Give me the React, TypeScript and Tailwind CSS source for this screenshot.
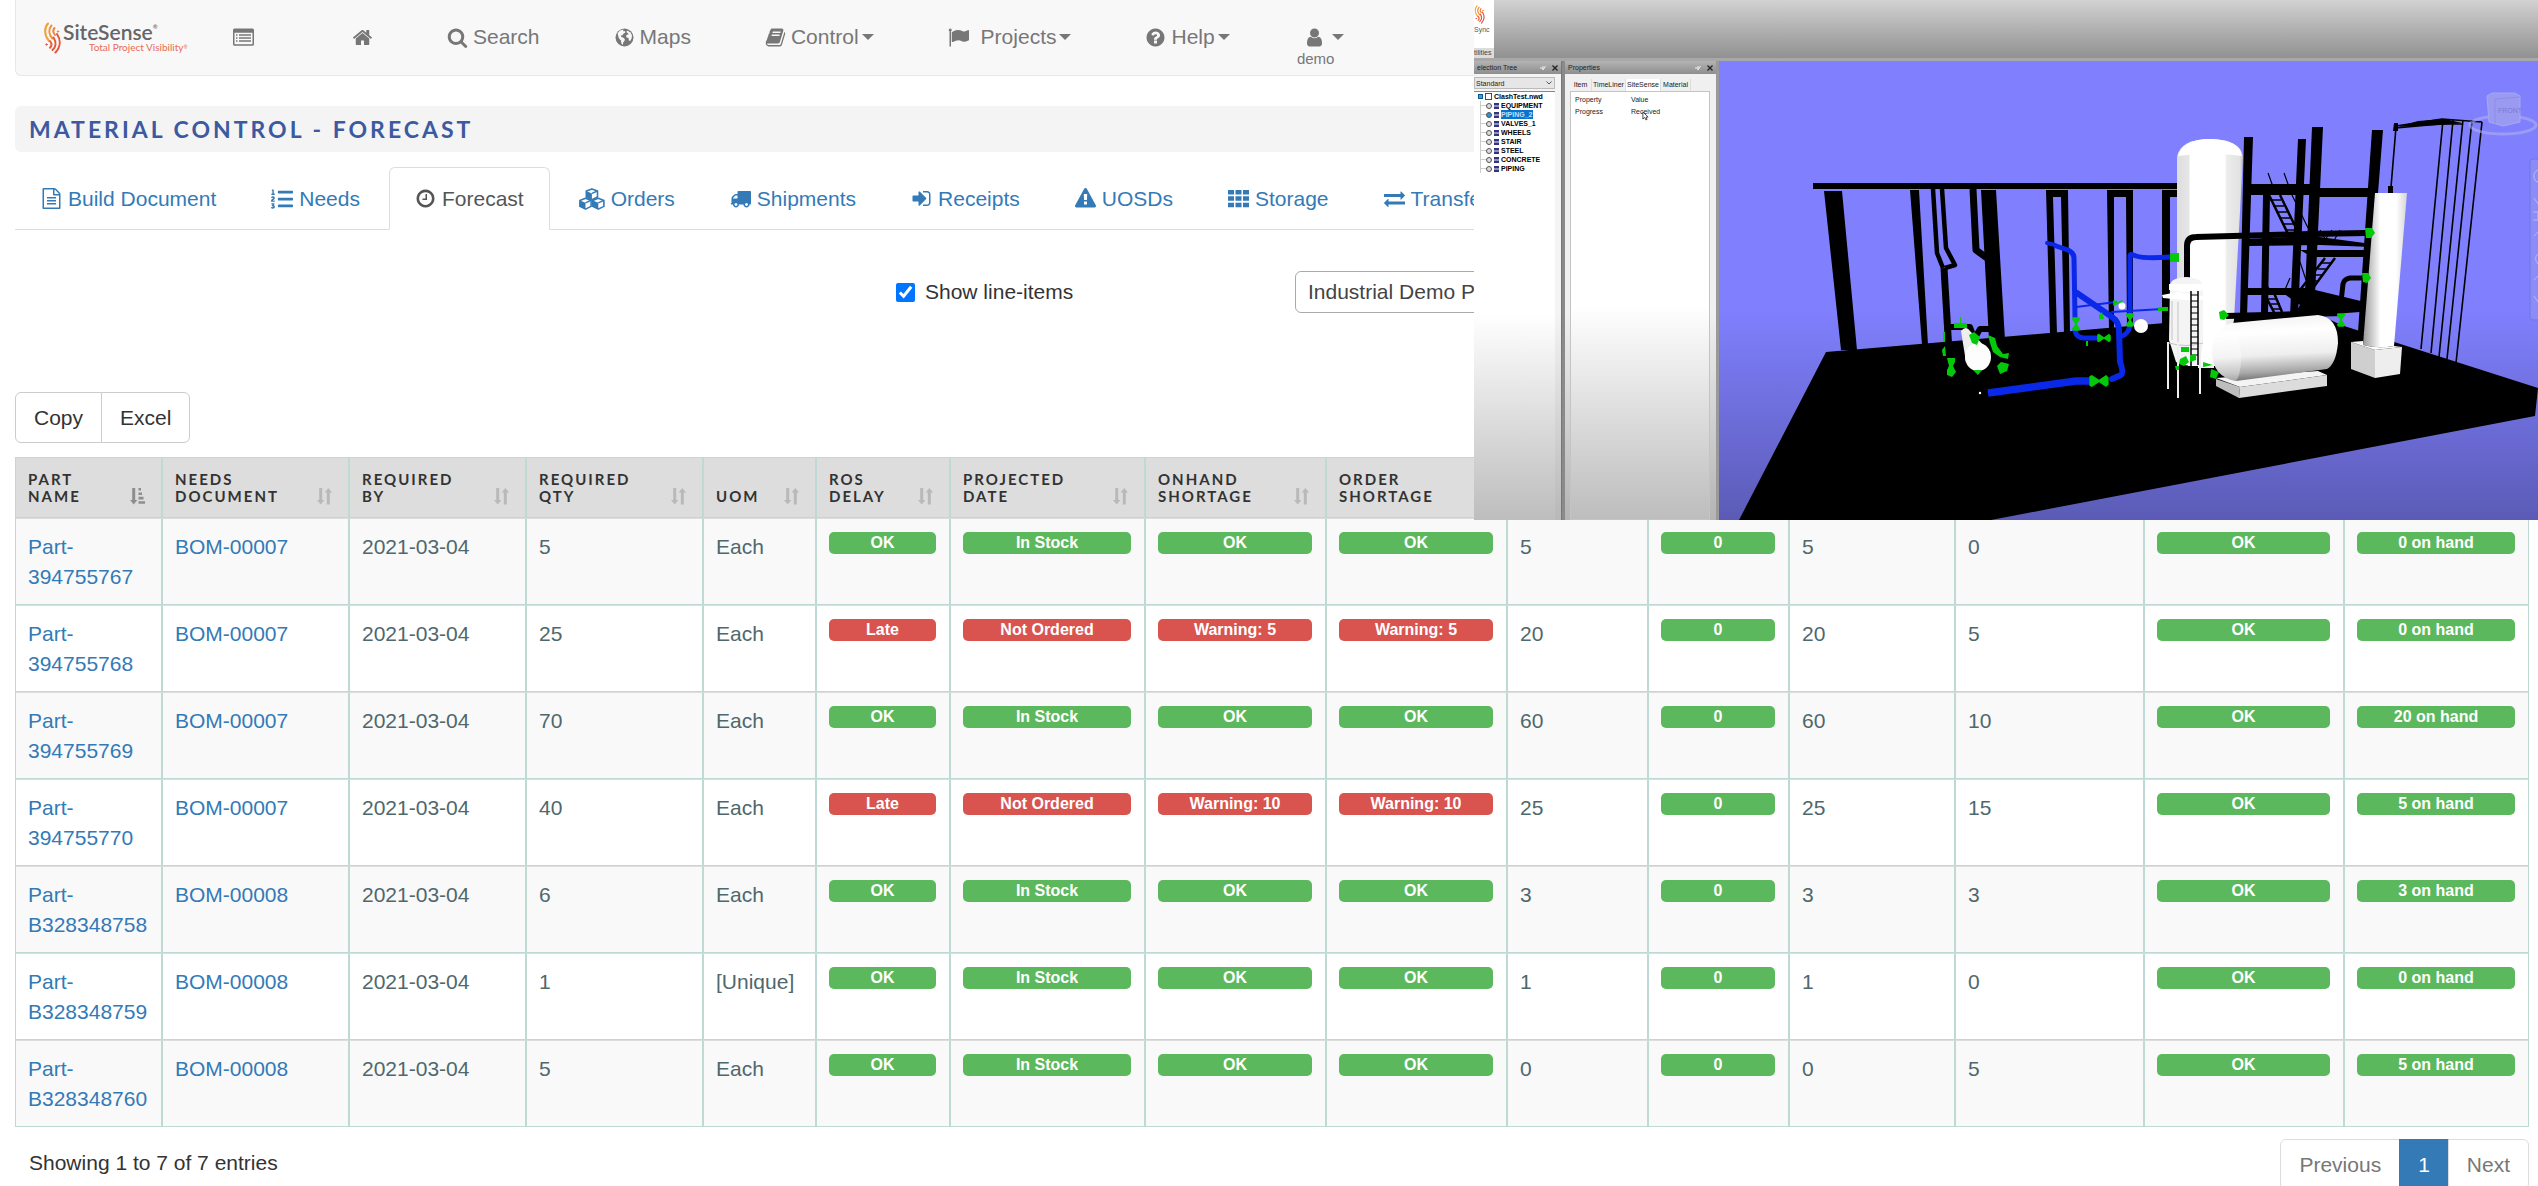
import React from "react";
import { FaListOl } from "react-icons/fa";

/* ---------- icons ---------- */

const PATHS: Record<string, string> = {
  search:
    "M1216 832q0-185-131.5-316.5t-316.5-131.5-316.5 131.5-131.5 316.5 131.5 316.5 316.5 131.5 316.5-131.5 131.5-316.5zm512 832q0 52-38 90t-90 38q-54 0-90-38l-343-342q-179 124-399 124-143 0-273.5-55.5t-225-150-150-225-55.5-273.5 55.5-273.5 150-225 225-150 273.5-55.5 273.5 55.5 225 150 150 225 55.5 273.5q0 220-124 399l343 343q37 37 37 90z",
  home: "M1472 992v480q0 26-19 45t-45 19h-384v-384h-256v384h-384q-26 0-45-19t-19-45v-480q0-1 .5-3t.5-3l575-474 575 474q1 2 1 6zm223-69l-62 74q-8 9-21 11h-3q-13 0-21-7l-692-577-692 577q-12 8-24 7-13-2-21-11l-62-74q-8-10-7-23.5t11-21.5l719-599q32-26 76-26t76 26l244 204v-195q0-14 9-23t23-9h192q14 0 23 9t9 23v408l219 182q10 8 11 21.5t-7 23.5z",
  list: "M128 128h1536q128 0 128 128v1216q0 128-128 128h-1536q-128 0-128-128v-1216q0-128 128-128zm0 352v992h1536v-992zM256 608h128v128h-128zM512 608h1024v128h-1024zM256 864h128v128h-128zM512 864h1024v128h-1024zM256 1120h128v128h-128zM512 1120h1024v128h-1024z",
  book: "M1703 478q40 57 18 129l-275 906q-19 64-76.5 107.5t-122.5 43.5h-923q-77 0-148.5-53.5t-99.5-131.5q-24-67-2-127 0-4 3-27t4-37q1-8-3-21.5t-3-19.5q2-11 8-21t16.5-23.5 16.5-23.5q23-38 45-91.5t30-91.5q3-10 .5-30t-.5-28q3-11 17-28t17-23q21-36 42-92t25-90q1-9-2.5-32t.5-28q4-13 22-30.5t22-22.5q19-26 42.5-84.5t27.5-96.5q1-8-3-25.5t-2-26.5q2-8 9-18t18-23 17-21q8-12 16.5-30.5t15-35 16-36 19.5-32 26.5-23.5 36-11.5 47.5 5.5l-1 3q38-9 51-9h761q74 0 114 56t18 130l-274 906q-36 119-71.5 153.5t-128.5 34.5h-869q-27 0-38 15-11 16-1 43 24 70 144 70h923q29 0 56-15.5t35-41.5l300-987q7-22 5-57 38 15 59 43zm-1064 2q-4 13 2 22.5t20 9.5h608q13 0 25.5-9.5t16.5-22.5l21-64q4-13-2-22.5t-20-9.5h-608q-13 0-25.5 9.5t-16.5 22.5zm-83 256q-4 13 2 22.5t20 9.5h608q13 0 25.5-9.5t16.5-22.5l21-64q4-13-2-22.5t-20-9.5h-608q-13 0-25.5 9.5t-16.5 22.5z",
  flag: "M320 256q0 72-64 110v1266q0 13-9.5 22.5t-22.5 9.5h-64q-13 0-22.5-9.5t-9.5-22.5v-1266q-64-38-64-110 0-53 37.5-90.5t90.5-37.5 90.5 37.5 37.5 90.5zm1472 64v763q0 25-12.5 38.5t-39.5 27.5q-215 116-369 116-61 0-123.5-22t-108.5-48-115.5-48-142.5-22q-192 0-464 146-17 9-33 9-26 0-45-19t-19-45v-742q0-32 31-55 21-14 79-43 236-120 421-120 107 0 200 29t219 88q38 19 88 19 54 0 117.5-21t110-47 88-47 54.5-21q26 0 45 19t19 45z",
  help: "M1024 1376v-192q0-14-9-23t-23-9h-192q-14 0-23 9t-9 23v192q0 14 9 23t23 9h192q14 0 23-9t9-23zm256-672q0-88-55.5-163t-138.5-116-170-41q-243 0-371 213-15 24 8 42l132 100q7 6 19 6 16 0 25-12 53-68 86-92 34-24 86-24 48 0 85.5 26t37.5 59q0 38-20 61t-68 45q-63 28-115.5 86.5t-52.5 125.5v36q0 14 9 23t23 9h192q14 0 23-9t9-23q0-19 21.5-49.5t54.5-49.5q32-18 49-28.5t46-35 44.5-48 28-60.5 12.5-81zm384 192q0 209-103 385.5t-279.5 279.5-385.5 103-385.5-103-279.5-279.5-103-385.5 103-385.5 279.5-279.5 385.5-103 385.5 103 279.5 279.5 103 385.5z",
  user: "M1536 1399q0 109-62.5 187t-150.5 78h-854q-88 0-150.5-78t-62.5-187q0-85 8.5-160.5t31.5-152 58.5-131 94-89 134.5-34.5q131 128 313 128t313-128q76 0 134.5 34.5t94 89 58.5 131 31.5 152 8.5 160.5zm-256-887q0 159-112.5 271.5t-271.5 112.5-271.5-112.5-112.5-271.5 112.5-271.5 271.5-112.5 271.5 112.5 112.5 271.5z",
  file: "M1596 380q28 28 48 76t20 88v1152q0 40-28 68t-68 28h-1344q-40 0-68-28t-28-68v-1600q0-40 28-68t68-28h896q40 0 88 20t76 48zm-444-244v376h376q-10-29-22-41l-313-313q-12-12-41-22zm384 1528v-1024h-416q-40 0-68-28t-28-68v-416h-768v1536h1280zm-1024-864q0-14 9-23t23-9h704q14 0 23 9t9 23v64q0 14-9 23t-23 9h-704q-14 0-23-9t-9-23v-64zm736 224q14 0 23 9t9 23v64q0 14-9 23t-23 9h-704q-14 0-23-9t-9-23v-64q0-14 9-23t23-9h704zm0 256q14 0 23 9t9 23v64q0 14-9 23t-23 9h-704q-14 0-23-9t-9-23v-64q0-14 9-23t23-9h704z",
  clock:
    "M1024 544v448q0 14-9 23t-23 9h-320q-14 0-23-9t-9-23v-64q0-14 9-23t23-9h224v-352q0-14 9-23t23-9h64q14 0 23 9t9 23zm416 352q0-148-73-273t-198-198-273-73-273 73-198 198-73 273 73 273 198 198 273 73 273-73 198-198 73-273zm224 0q0 209-103 385.5t-279.5 279.5-385.5 103-385.5-103-279.5-279.5-103-385.5 103-385.5 279.5-279.5 385.5-103 385.5 103 279.5 279.5 103 385.5z",
  truck:
    "M640 1408q0-52-38-90t-90-38-90 38-38 90 38 90 90 38 90-38 38-90zm-384-512h384v-256h-158q-13 0-22 9l-195 195q-9 9-9 22v30zm1280 512q0-52-38-90t-90-38-90 38-38 90 38 90 90 38 90-38 38-90zm256-1088v1024q0 15-4 26.5t-13.5 18.5-16.5 11.5-23.5 6-22.5 2-25.5 0-22.5-.5q0 106-75 181t-181 75-181-75-75-181h-384q0 106-75 181t-181 75-181-75-75-181h-64q-3 0-22.5.5t-25.5 0-22.5-2-23.5-6-16.5-11.5-13.5-18.5-4-26.5q0-26 19-45t45-19v-320q0-8-.5-35t0-38 2.5-34.5 6.5-37 14-30.5 22.5-30l198-198q19-19 50.5-32t58.5-13h160v-192q0-26 19-45t45-19h1024q26 0 45 19t19 45z",
  signIn:
    "M1312 896q0 26-19 45l-544 544q-19 19-45 19t-45-19-19-45v-288h-448q-26 0-45-19t-19-45v-384q0-26 19-45t45-19h448v-288q0-26 19-45t45-19 45 19l544 544q19 19 19 45zm352-352v704q0 119-84.5 203.5t-203.5 84.5h-320q-13 0-22.5-9.5t-9.5-22.5q0-4-1-20t-.5-26.5 3-23.5 10-19.5 20.5-6.5h320q66 0 113-47t47-113v-704q0-66-47-113t-113-47h-312l-11.5-1-11.5-3-8-5.5-7-9-2-13.5q0-4-1-20t-.5-26.5 3-23.5 10-19.5 20.5-6.5h320q119 0 203.5 84.5t84.5 203.5z",
  warning:
    "M1024 1375v-190q0-14-9.5-23.5t-22.5-9.5h-192q-13 0-22.5 9.5t-9.5 23.5v190q0 14 9.5 23.5t22.5 9.5h192q13 0 22.5-9.5t9.5-23.5zm-2-374l18-459q0-12-10-19-13-11-24-11h-220q-11 0-24 11-10 7-10 21l17 457q0 10 10 16.5t24 6.5h185q14 0 23.5-6.5t10.5-16.5zm-14-934l768 1408q35 63-2 126-17 29-46.5 46t-63.5 17h-1536q-34 0-63.5-17t-46.5-46q-37-63-2-126l768-1408q17-31 47-49t65-18 65 18 47 49z",
  grid: "M0 160h512v384h-512zM640 160h512v384h-512zM1280 160h512v384h-512zM0 704h512v384h-512zM640 704h512v384h-512zM1280 704h512v384h-512zM0 1248h512v384h-512zM640 1248h512v384h-512zM1280 1248h512v384h-512z",
  exchange:
    "M1792 1184v192q0 13-9.5 22.5t-22.5 9.5h-1376v192q0 13-9.5 22.5t-22.5 9.5q-12 0-24-10l-319-320q-9-9-9-22 0-14 9-23l320-320q9-9 23-9 13 0 22.5 9.5t9.5 22.5v192h1376q13 0 22.5 9.5t9.5 22.5zm0-544q0 14-9 23l-320 320q-9 9-23 9-13 0-22.5-9.5t-9.5-22.5v-192h-1376q-13 0-22.5-9.5t-9.5-22.5v-192q0-13 9.5-22.5t22.5-9.5h1376v-192q0-14 9-23t23-9q12 0 24 10l319 319q9 9 9 23z",
};

function Icon({ name }: { name: string }) {
  return (
    <svg viewBox="0 0 1792 1792" className="size-[21px] shrink-0 fill-current" fillRule="evenodd" aria-hidden="true">
      <path d={PATHS[name]} />
    </svg>
  );
}

function GlobeIcon() {
  return (
    <svg viewBox="0 0 21 21" className="size-[21px] shrink-0" aria-hidden="true">
      <circle cx="10.5" cy="10.5" r="9" className="fill-current" />
      <path
        fill="#f8f8f8"
        d="M3.6 6.2 6 3.6 9.6 2.6 9 4.2 10.8 4 11.4 5.4 9.4 6.8 8.4 8.2 6.6 8.8 7.4 10 9 10.6 10.8 12 10.6 13.8 9.2 15.4 8.8 18 7.4 16.6 7 13.6 5 11.4 4.2 9zM13.2 3.4 16.6 5.4 18 8.4 17.6 11.4 16.2 14 14.8 13.4 14.6 11 12.6 10.6 12 8.8 13.4 7.6 15 7.2 13.6 6 12.4 5z"
      />
    </svg>
  );
}

function CubesIcon() {
  const cube = (x: number, y: number) => (
    <g transform={`translate(${x} ${y})`}>
      <path d="M6.5.9 12.1 3v6L6.5 11.7.9 9V3z" fill="none" stroke="currentColor" strokeWidth="1.6" strokeLinejoin="round" />
      <path d="M.9 3 6.5 5.4V11.7L.9 9z" fill="currentColor" />
      <path d="M6.5 5.4 12.1 3" stroke="currentColor" strokeWidth="1.4" />
    </g>
  );
  return (
    <svg viewBox="0 0 26 22" className="h-[22px] w-[26px] shrink-0" aria-hidden="true">
      {cube(6.4, 0)}
      {cube(0, 9.4)}
      {cube(12.8, 9.4)}
    </svg>
  );
}

function Caret() {
  return <span className="ml-[3px] border-x-[6px] border-t-[6px] border-x-transparent border-t-current" />;
}

function SortIcon({ active }: { active?: boolean }) {
  return (
    <svg
      viewBox="0 0 15 17"
      className={"h-[17px] w-[15px] shrink-0 " + (active ? "fill-[#8e8e8e]" : "fill-[#b9b9b9]")}
      aria-hidden="true"
    >
      <path d="M2.2 0h3v12H7.4L3.7 16.5 0 12h2.2z" />
      {active ? (
        <path d="M8.5 0h2.5v2.6H8.5zM8.5 4.4H12v2.6H8.5zM8.5 8.8h5v2.6h-5zM8.5 13.2H15v2.6H8.5z" />
      ) : (
        <path d="M9.8 16.5h3v-12H15L11.3 0 7.6 4.5h2.2z" />
      )}
    </svg>
  );
}

function Waves({ className }: { className: string }) {
  return (
    <svg viewBox="0 0 18 32" className={className} fill="none" strokeWidth="2" strokeLinecap="round" aria-hidden="true">
      <path stroke="#f2a23c" d="M4 1.5C0 6 0 13 5 19" />
      <path stroke="#f0923a" d="M7.500 3.5C4.500 7 4.500 12 8.500 16.500" />
      <path stroke="#ee8238" d="M10.500 6C8.800 8 9 10.500 11 13" />
      <path stroke="#e8543c" d="M13 12C17 18 16.500 25 11.500 30.500" />
      <path stroke="#e8543c" d="M9.500 15.500C12.500 20 12 25 8.500 28" />
      <path stroke="#ea6040" d="M6 19C8 21.500 7.700 24 6 25.800" />
      <circle cx="14" cy="9.500" r=".7" fill="#ee8238" stroke="#ee8238" strokeWidth="1" />
      <circle cx="2.500" cy="22.500" r=".7" fill="#e8543c" stroke="#e8543c" strokeWidth="1" />
    </svg>
  );
}

/* ---------- header ---------- */

function NavLink({ icon, label, caret }: { icon: React.ReactNode; label?: string; caret?: boolean }) {
  return (
    <a href="#" className="flex items-center whitespace-nowrap">
      {icon}
      {label && <span className="ml-[5px]">{label}</span>}
      {caret && <Caret />}
    </a>
  );
}

function NavBar() {
  return (
    <nav className="flex h-[76px] items-start rounded-b-md border border-t-0 border-[#e7e7e7] bg-[#f8f8f8] pt-[22px] pl-[28px] text-[#777]">
      <a href="#" className="flex w-[189px] items-start" aria-label="SiteSense home">
        <Waves className="h-[32px] w-[18px]" />
        <span className="ml-[1px] flex flex-col font-[Lato]">
          <span className="text-[21px] leading-[20px] font-semibold text-[#666]">
            SiteSense<sup className="top-[-11px] text-[6px]">®</sup>
          </span>
          <span className="pl-[26px] text-[10px] leading-[10px] whitespace-nowrap text-[#ea6a55]">
            Total Project Visibility<sup className="text-[5px]">®</sup>
          </span>
        </span>
      </a>
      <div className="flex items-start gap-[74px]">
        <span className="mr-6 flex h-[30px] items-center">
          <NavLink icon={<Icon name="list" />} />
        </span>
        <span className="flex h-[30px] items-center">
          <NavLink icon={<Icon name="home" />} />
        </span>
        <NavLink icon={<Icon name="search" />} label="Search" />
        <NavLink icon={<GlobeIcon />} label="Maps" />
        <NavLink icon={<Icon name="book" />} label="Control" caret />
        <a href="#" className="flex items-center">
          <Icon name="flag" />
          <span className="ml-3">Projects</span>
          <Caret />
        </a>
        <NavLink icon={<Icon name="help" />} label="Help" caret />
        <a href="#" className="-ml-2 flex flex-col items-center">
          <span className="flex h-[30px] items-center gap-1 pl-2">
            <Icon name="user" />
            <Caret />
          </span>
          <span className="-ml-2 text-[15px] leading-[14px]">demo</span>
        </a>
      </div>
    </nav>
  );
}

const TABS: { label: string; icon: React.ReactNode; active?: boolean }[] = [
  { label: "Build Document", icon: <Icon name="file" /> },
  { label: "Needs", icon: <FaListOl className="size-[22px]" /> },
  { label: "Forecast", icon: <Icon name="clock" />, active: true },
  { label: "Orders", icon: <CubesIcon /> },
  { label: "Shipments", icon: <Icon name="truck" /> },
  { label: "Receipts", icon: <Icon name="signIn" /> },
  { label: "UOSDs", icon: <Icon name="warning" /> },
  { label: "Storage", icon: <Icon name="grid" /> },
  { label: "Transfers", icon: <Icon name="exchange" /> },
];

function Tabs() {
  return (
    <ul className="mt-[15px] flex gap-[3px] border-b border-[#ddd]">
      {TABS.map((t) => (
        <li key={t.label} className="-mb-px">
          <a
            href="#"
            className={
              "flex h-[63px] items-center gap-[6px] rounded-t-md border px-[25px] whitespace-nowrap " +
              (t.active ? "border-[#ddd] border-b-white bg-white text-[#555]" : "border-transparent text-[#337ab7]")
            }
          >
            {t.icon}
            {t.label}
          </a>
        </li>
      ))}
    </ul>
  );
}

/* ---------- table ---------- */

const COLUMNS: { label: string[]; width: string }[] = [
  { label: ["Part", "Name"], width: "w-[147px]" },
  { label: ["Needs", "Document"], width: "w-[187px]" },
  { label: ["Required", "By"], width: "w-[177px]" },
  { label: ["Required", "Qty"], width: "w-[177px]" },
  { label: ["UOM"], width: "w-[113px]" },
  { label: ["ROS", "Delay"], width: "w-[134px]" },
  { label: ["Projected", "Date"], width: "w-[195px]" },
  { label: ["Onhand", "Shortage"], width: "w-[181px]" },
  { label: ["Order", "Shortage"], width: "w-[181px]" },
  { label: [], width: "w-[141px]" },
  { label: [], width: "w-[141px]" },
  { label: [], width: "w-[166px]" },
  { label: [], width: "w-[189px]" },
  { label: [], width: "w-[200px]" },
  { label: [], width: "w-[185px]" },
];

type Row = {
  part: string;
  doc: string;
  qty: number;
  uom: string;
  short: number;
  a: number;
  b: number;
  c: number;
  hand: number;
};

const ROWS: Row[] = [
  { part: "394755767", doc: "BOM-00007", qty: 5, uom: "Each", short: 0, a: 5, b: 5, c: 0, hand: 0 },
  { part: "394755768", doc: "BOM-00007", qty: 25, uom: "Each", short: 5, a: 20, b: 20, c: 5, hand: 0 },
  { part: "394755769", doc: "BOM-00007", qty: 70, uom: "Each", short: 0, a: 60, b: 60, c: 10, hand: 20 },
  { part: "394755770", doc: "BOM-00007", qty: 40, uom: "Each", short: 10, a: 25, b: 25, c: 15, hand: 5 },
  { part: "B328348758", doc: "BOM-00008", qty: 6, uom: "Each", short: 0, a: 3, b: 3, c: 3, hand: 3 },
  { part: "B328348759", doc: "BOM-00008", qty: 1, uom: "[Unique]", short: 0, a: 1, b: 1, c: 0, hand: 0 },
  { part: "B328348760", doc: "BOM-00008", qty: 5, uom: "Each", short: 0, a: 0, b: 0, c: 5, hand: 5 },
];

function Badge({ bad, children }: { bad?: boolean; children: React.ReactNode }) {
  return (
    <span
      className={
        "block h-[22px] rounded-[5px] text-center text-[16px] leading-[21px] font-bold text-white " +
        (bad ? "bg-[#d9534f]" : "bg-[#5cb85c]")
      }
    >
      {children}
    </span>
  );
}

function Cell({ children }: { children: React.ReactNode }) {
  return (
    <td className="h-[87px] border-x border-t border-b border-x-[#bfdad5] border-t-[#ddd] border-b-[#bfdad5] pt-[13px] pr-[13px] pl-3 align-top">
      {children}
    </td>
  );
}

function ForecastTable() {
  return (
    <table className="mt-[14px] w-full table-fixed border-separate border-spacing-0 text-[#4f686c]">
      <colgroup>
        {COLUMNS.map((c, i) => (
          <col key={i} className={c.width} />
        ))}
      </colgroup>
      <thead>
        <tr>
          {COLUMNS.map((c, i) => (
            <th
              key={i}
              scope="col"
              className="h-[61px] border border-[#bfdad5] bg-[#ddd] pr-4 pb-[12px] pl-3 text-left align-bottom font-['Trebuchet_MS',Lato,sans-serif] text-[15px] leading-[17px] font-bold tracking-[2px] text-[#333] uppercase"
            >
              <span className="flex items-end justify-between">
                <span>
                  {c.label.map((l) => (
                    <span key={l} className="block">
                      {l}
                    </span>
                  ))}
                </span>
                <SortIcon active={i === 0} />
              </span>
            </th>
          ))}
        </tr>
      </thead>
      <tbody>
        {ROWS.map((r) => {
          const bad = r.short > 0;
          const shortage = bad ? `Warning: ${r.short}` : "OK";
          return (
            <tr key={r.part} className="odd:bg-[#f9f9f9]">
              <Cell>
                <a href="#" className="block text-[#337ab7]">
                  Part-
                  <br />
                  {r.part}
                </a>
              </Cell>
              <Cell>
                <a href="#" className="text-[#337ab7]">
                  {r.doc}
                </a>
              </Cell>
              <Cell>2021-03-04</Cell>
              <Cell>{r.qty}</Cell>
              <Cell>{r.uom}</Cell>
              <Cell>
                <Badge bad={bad}>{bad ? "Late" : "OK"}</Badge>
              </Cell>
              <Cell>
                <Badge bad={bad}>{bad ? "Not Ordered" : "In Stock"}</Badge>
              </Cell>
              <Cell>
                <Badge bad={bad}>{shortage}</Badge>
              </Cell>
              <Cell>
                <Badge bad={bad}>{shortage}</Badge>
              </Cell>
              <Cell>{r.a}</Cell>
              <Cell>
                <Badge>0</Badge>
              </Cell>
              <Cell>{r.b}</Cell>
              <Cell>{r.c}</Cell>
              <Cell>
                <Badge>OK</Badge>
              </Cell>
              <Cell>
                <Badge>{r.hand} on hand</Badge>
              </Cell>
            </tr>
          );
        })}
      </tbody>
    </table>
  );
}

/* ---------- 3D viewer window ---------- */

function Valve({ x, y, r = 0, s = 0.85 }: { x: number; y: number; r?: number; s?: number }) {
  return <path fill="#04c80a" transform={`translate(${x} ${y}) rotate(${r}) scale(${s})`} d="M-8-4-6-5 0-1 6-5 8-3V3L6 5 0 1-6 5-8 4z" />;
}

function PlantScene() {
  return (
    <svg viewBox="1719 61 819 459" preserveAspectRatio="none" className="min-w-0 flex-1" role="img" aria-label="Plant model">
      <defs>
        <linearGradient id="sky" x1="0" y1="0" x2="0" y2="1">
          <stop offset="0" stopColor="#8080ff" />
          <stop offset="0.54" stopColor="#8080ff" />
          <stop offset="1" stopColor="#5b5bb6" />
        </linearGradient>
        <linearGradient id="tower" x1="0" x2="1">
          <stop offset="0" stopColor="#ddd" />
          <stop offset="0.18" stopColor="#e6e6e6" />
          <stop offset="0.2" stopColor="#fff" />
          <stop offset="0.72" stopColor="#fff" />
          <stop offset="0.76" stopColor="#ececec" />
          <stop offset="0.95" stopColor="#e2e2e2" />
          <stop offset="1" stopColor="#bbb" />
        </linearGradient>
        <linearGradient id="stack" x1="0" x2="1">
          <stop offset="0" stopColor="#999" />
          <stop offset="0.4" stopColor="#fff" />
          <stop offset="0.75" stopColor="#fff" />
          <stop offset="1" stopColor="#d5d5d5" />
        </linearGradient>
        <linearGradient id="drum" x1="0.45" y1="0" x2="0.55" y2="1">
          <stop offset="0" stopColor="#f2f2f2" />
          <stop offset="0.25" stopColor="#fff" />
          <stop offset="0.6" stopColor="#eee" />
          <stop offset="0.85" stopColor="#a8a8a8" />
          <stop offset="1" stopColor="#666" />
        </linearGradient>
      </defs>
      <rect x="1719" y="61" width="819" height="459" fill="url(#sky)" />

      {/* floor slab */}
      <path d="M1826 352 2165 323 2310 310 2341 325 2538 388 2535 416 1991 520H1739z" />

      {/* portal frames */}
      <path d="M1813 183H2178V189H1813z" />
      <path d="M1824 191H1842L1857 350H1841zM1910 190H1919L1928 345H1922zM1981 190H1996L2005 340H1989zM2046 190H2068L2070 334H2064L2061 197H2053L2057 334H2050zM2107 190H2133V330H2127L2126 197H2114V330H2109zM2162 190H2178V197H2170V326H2162z" />
      <g fill="none" stroke="#000" strokeLinejoin="round">
        <path strokeWidth="4.500" d="M1933 189 1937 253 1943 268M1942 189 1946 248 1955 265 1945 268" />
        <path strokeWidth="7" d="M1944 268 1949 352" />
        <path strokeWidth="7" d="M1973 189 1976 250 1987 258" />
        <path strokeWidth="6" d="M1949 327H1970L1974 338M1976 336 1980 329H1990" />
      </g>

      {/* stair tower steelwork */}
      <path d="M2244 137H2253L2247 316H2240zM2298 139H2306L2298 316H2290zM2312 127H2323L2314 316H2304zM2372 130H2383L2367 332H2358zM2263 195H2270L2268 314H2261z" />
      <path d="M2244 184H2312V189H2320V188H2376V197H2312V195H2244zM2247 239 2312 236 2372 244V247L2320 245 2247 246zM2300 250H2365V257H2312zM2244 288H2305V295H2242zM2280 291 2307 288 2369 303 2360 312 2293 317 2300 305z" />
      <g fill="none" stroke="#000">
        <path strokeWidth="2.500" d="M2269 195 2289 236M2280 195 2296 228M2325 258 2300 290M2335 258 2310 292M2266 297 2276 316M2274 293 2282 312" />
        <path
          strokeWidth="1.500"
          d="M2270 200H2281M2273 206H2284M2276 212H2287M2279 218H2290M2282 224H2293M2285 230H2296M2322 263H2331M2318 269H2327M2314 275H2323M2309 281H2318M2268 299H2277M2271 304H2280M2273 309H2282"
        />
        <path strokeWidth="1.200" d="M2268 173 2276 195M2284 173 2292 195M2292 195 2308 228M2320 230 2328 244M2332 230 2322 244M2340 230 2332 244M2300 262 2306 280M2264 282 2272 292M2290 278 2284 292" />
      </g>

      {/* lifting wires */}
      <g fill="none" stroke="#000">
        <path strokeWidth="1.600" d="M2396 127 2391 187M2443 120 2421 349M2453 120 2431 353M2463 120 2439 357M2472 120 2447 359M2482 122 2456 363" />
        <path strokeWidth="1.500" d="M2396 126 2422 122 2442 119 2482 122M2396 128 2440 124 2462 124" />
      </g>
      <path d="M2398 127 2418 121 2445 119 2462 123 2440 125zM2394 123H2398V131H2393zM2388 186H2393V193H2388z" />

      {/* tower */}
      <path d="M2177 157Q2180 139 2211 139 2241 140 2243 157L2234 320 2224 366H2188L2177 290z" fill="url(#tower)" />
      <path d="M2178 156Q2182 139 2211 139 2240 140 2242 156 2210 151 2178 156z" fill="#fff" />
      <g fill="none" stroke="#000">
        <path strokeWidth="6" d="M2187 279 2187 246Q2187 237 2196 237L2310 234 2366 233" />
        <path strokeWidth="5" d="M2341 302 2343 284Q2344 279 2350 278H2362" />
        <path strokeWidth="6" d="M2226 316 2344 313" />
      </g>

      {/* stack and pedestal */}
      <path d="M2375 193H2407L2394 346Q2378 349 2363 345z" fill="url(#stack)" />
      <path d="M2351 342 2375 350V378L2351 369z" fill="#cfcfcf" />
      <path d="M2375 350 2402 347 2400 374 2375 378z" fill="#eee" />
      <path d="M2351 342 2363 341V345Q2378 349 2394 346L2402 347 2375 350z" fill="#fafafa" />

      {/* piping */}
      <g fill="none" stroke="#0a28e8" strokeLinejoin="round" strokeLinecap="round">
        <path strokeWidth="4" d="M2047 243 2055 245" />
        <path strokeWidth="5" d="M2056 246 2068 250Q2074 253 2074 258L2075 318" />
        <path strokeWidth="5" d="M2075 331Q2077 338 2084 338L2096 338M2130 326Q2128 334 2122 336" />
        <path strokeWidth="5" d="M2130 312V256Q2130 253 2136 256 2145 259 2170 257" />
        <path strokeWidth="6" d="M2077 293 2112 317Q2119 322 2119 330L2120 362Q2124 372 2121 375L2112 379" />
        <path strokeWidth="2" d="M2076 307 2116 302M2112 312 2162 309" />
      </g>
      <path stroke="#0a28e8" strokeWidth="7.500" d="M1988 393 2076 381 2090 381" fill="none" />
      <Valve x={2099} y={381} s={1.2} />
      <Valve x={2104} y={338} />
      <Valve x={2076} y={324} r={90} />
      <Valve x={2130} y={320} r={90} />
      <Valve x={2118} y={303} s={0.6} />
      <Valve x={2341} y={320} r={90} />
      <circle cx="2141" cy="326" r="7" fill="#fff" />
      <circle cx="2122" cy="306" r="3.500" fill="#fff" />
      <g fill="#04c80a">
        <path d="M2170 253H2179V262H2170zM2158 307H2168V311H2158zM2219 312 2224 310 2229 315 2224 320 2220 319zM2365 228 2372 228 2375 233 2371 238 2366 238zM2362 273 2368 273 2371 278 2367 283 2363 282zM2099 315 2102 312 2104 319H2099zM2086 341H2088V346H2086z" />
      </g>

      {/* pump */}
      <path d="M1961 331Q1966 325 1970 331L1990 352 1966 362z" fill="#eee" />
      <ellipse cx="1978" cy="357" rx="13" ry="14" fill="#fdfdfd" />
      <g fill="#04c80a">
        <path d="M1954 323H1967V328H1954zM1960 317H1961V324H1960zM1943 332H1945V342H1943zM1942 350 1945 346 1946 356H1943zM1947 358H1955V362L1953 366 1956 372 1952 377 1947 375V370L1949 366zM1969 335 1974 332 1980 337 1977 345 1972 343zM1988 335 1995 338 1997 346 2003 354 2009 353 2008 359 2000 357 1993 352 1990 343zM1997 366 2001 362 2009 364 2007 371 2000 374zM1973 370H1982L1978 375z" />
      </g>
      <circle cx="1980" cy="393" r="1.200" fill="#fff" />

      {/* vertical tank */}
      <path d="M2170 285Q2171 278 2186 277 2201 278 2203 285L2203 342 2200 364Q2186 368 2176 362L2169 340z" fill="#f4f4f4" />
      <path d="M2162 295 2178 292 2208 297V299L2195 301 2163 298zM2169 284H2204V290Q2186 294 2169 290z" fill="#fff" />
      <path d="M2172 301V340M2178 302V342M2169 343Q2186 348 2203 343" stroke="#c4c4c4" fill="none" />
      <path d="M2168 342V389M2178 344V398M2200 344V394M2198 367H2214" stroke="#eee" strokeWidth="2" />
      <path d="M2191 291V385M2198 291V365" stroke="#000" strokeWidth="1.500" />
      <path
        d="M2191 295H2198M2191 301H2198M2191 307H2198M2191 313H2198M2191 319H2198M2191 325H2198M2191 331H2198M2191 337H2198M2191 343H2198M2191 349H2198M2191 355H2198"
        stroke="#000"
        strokeWidth="1.200"
      />
      <g fill="#04c80a">
        <path d="M2181 347H2189V352H2181zM2180 359 2186 356 2189 362 2184 366 2179 364zM2190 355 2196 354V360L2190 362zM2175 366H2179V370H2176zM2203 362 2213 365 2203 367zM2211 369 2219 372 2216 379 2210 377z" />
      </g>

      {/* horizontal drum on its base */}
      <path d="M2216 378 2240 387 2327 375 2318 371z" fill="#f4f4f4" />
      <path d="M2216 379 2240 387 2239 398 2216 386z" fill="#bdbdbd" />
      <path d="M2240 387 2327 375V386L2239 398z" fill="#dcdcdc" />
      <path d="M2232 323 2318 315Q2338 317 2338 343 2336 364 2327 369L2236 381Q2213 377 2212 353 2213 328 2232 323z" fill="url(#drum)" />
      <path d="M2232 323Q2242 340 2241 362 2240 376 2236 381 2213 377 2212 353 2213 328 2232 323z" fill="#fff" opacity="0.35" />

      {/* view cube */}
      <g opacity="0.55">
        <ellipse cx="2503" cy="125" rx="33" ry="9" fill="none" stroke="#b4b4f0" strokeWidth="3" />
        <path d="M2487 96 2492 93H2515L2520 96V122L2503 126 2489 122z" fill="#b0b0e4" stroke="#c8c8f4" />
        <path d="M2495 99 2520 97M2495 99V124" stroke="#9a9ad8" fill="none" />
        <text x="2498" y="113" fontSize="7" fill="#7474b8" fontFamily="Liberation Sans">
          FRONT
        </text>
      </g>
      <path d="M2539 159H2533Q2530 159 2530 162V317Q2530 320 2533 320H2539z" fill="#8c8cf8" stroke="#7474e0" />
      <path d="M2538 170Q2533 172 2534 178 2535 182 2538 182M2534 198 2538 204M2533 212H2538V220H2533M2534 236 2538 232M2538 254Q2533 258 2538 264M2534 280 2538 276M2534 296 2538 302" stroke="#b8b8ff" fill="none" />
    </svg>
  );
}

const TREE = ["EQUIPMENT", "PIPING_2", "VALVES_1", "WHEELS", "STAIR", "STEEL", "CONCRETE", "PIPING"];
const PROP_TABS = ["Item", "TimeLiner", "SiteSense", "Material"];

function PanelTitle({ title }: { title: string }) {
  return (
    <div className="flex h-[13px] items-center justify-between bg-linear-to-b from-[#b4b4b4] to-[#8e8e8e] px-[3px]">
      <span>{title}</span>
      <span className="flex items-center gap-[6px]">
        <svg viewBox="0 0 6 6" className="size-[6px]" fill="none" stroke="#eee" aria-hidden="true">
          <path d="M0 3H3M3 1V5L5.500 1" />
        </svg>
        <svg viewBox="0 0 6 6" className="size-[6px]" fill="none" stroke="#222" strokeWidth="1.300" aria-hidden="true">
          <path d="M.5.5 5.500 5.500M5.500.5.5 5.500" />
        </svg>
      </span>
    </div>
  );
}

function ViewerWindow() {
  return (
    <section className="absolute top-0 right-0 flex h-[520px] w-[1064px] flex-col overflow-hidden bg-[#a8a8a8] text-[7px] leading-[9px] text-[#222]">
      <div className="flex h-[58px] shrink-0 bg-linear-to-b from-[#d2d2d2] to-[#919191]">
        <div className="flex w-[20px] flex-col bg-white">
          <Waves className="mt-[5px] h-[19px] w-[12px]" />
          <span className="mt-[1px] text-[#555]">Sync</span>
          <span className="mt-auto bg-[#dcdcdc] leading-[10px] text-[#444]">tilities</span>
        </div>
      </div>
      <div className="mt-[3px] flex min-h-0 flex-1">
        <div className="flex w-[88px] flex-col border-r border-[#777] bg-linear-to-b from-[#f4f4f4] from-55% to-[#b8b8b8]">
          <PanelTitle title="election Tree" />
          <button className="mt-[3px] mr-[6px] flex h-[12px] items-center justify-between border border-[#bbb] bg-[#e6e6e6] px-[1px] pr-[2px]">
            Standard
            <svg viewBox="0 0 6 4" className="h-[4px] w-[6px]" fill="none" stroke="#555" aria-hidden="true">
              <path d="M.5.5 3 3 5.500.5" />
            </svg>
          </button>
          <div className="mt-[2px] mr-[6px] flex-1 border-t border-[#888] bg-linear-to-b from-white from-52% to-[#bdbdbd] font-bold text-black">
            <div className="flex items-center gap-[2px] pl-1">
              <span className="size-[5px] border border-[#0a5a90] bg-[#38a0e0]" />
              <span className="size-[7px] border border-[#44448c]" />
              ClashTest.nwd
            </div>
            <ul className="ml-[6px] border-l border-[#ccc]">
              {TREE.map((t) => (
                <li key={t} className="flex items-center">
                  <span className="w-[5px] border-t border-[#ccc]" />
                  <span
                    className={
                      "mr-[2px] size-[6px] rounded-full border border-[#555] " + (t === "PIPING_2" ? "bg-[#2c90d8]" : "bg-[#ddd]")
                    }
                  />
                  <span className="mr-[2px] h-[6px] w-[5px] border-y-2 border-[#34347c] bg-[#9090c0]" />
                  <span className={t === "PIPING_2" ? "bg-[#0a74cc] text-[#bfe0ff]" : ""}>{t}</span>
                </li>
              ))}
            </ul>
          </div>
        </div>
        <div className="w-[3px] bg-[#8a8a8a]" />
        <div className="flex w-[152px] flex-col border-r border-[#999] bg-linear-to-b from-[#f0f0f0] from-55% to-[#b4b4b4]">
          <PanelTitle title="Properties" />
          <div className="mt-[4px] grid h-[13px] grid-cols-[22px_34px_35px_30px] items-center pl-[5px]" role="tablist">
            {PROP_TABS.map((t) => (
              <button
                key={t}
                role="tab"
                className={"h-[12px] border-r border-[#ddd] text-center whitespace-nowrap " + (t === "SiteSense" ? "bg-white" : "")}
              >
                {t}
              </button>
            ))}
          </div>
          <div className="mr-[6px] ml-[5px] flex-1 border border-[#c4c4c4] bg-linear-to-b from-white from-50% to-[#bdbdbd] px-[4px] pt-[3px]">
            <dl className="grid grid-cols-[56px_1fr] gap-y-[3px]">
              <dt>Property</dt>
              <dd>Value</dd>
              <dt>Progress</dt>
              <dd className="relative">
                Received
                <svg viewBox="0 0 8 11" className="absolute top-[4px] left-[11px] h-[10px] w-[7px]" fill="#fff" stroke="#333" aria-hidden="true">
                  <path d="M1 .8V9L3 7.200 4.500 10 5.800 9.400 4.600 6.700H7z" />
                </svg>
              </dd>
            </dl>
          </div>
        </div>
        <div className="w-[2px] bg-[#9a9a9a]" />
        <PlantScene />
      </div>
    </section>
  );
}

/* ---------- page ---------- */

export default function App() {
  return (
    <main className="relative h-screen overflow-hidden bg-white pr-[9px] pl-[15px] font-['Liberation_Sans',Arial,sans-serif] text-[21px] leading-[30px] text-[#333]">
      <NavBar />
      <h1 className="mt-[30px] h-[46px] rounded-md bg-[#f4f4f4] pl-[14px] font-['Trebuchet_MS',Lato,sans-serif] text-[23px] leading-[46px] font-bold tracking-[3px] text-[#3b5a9f] uppercase">
        Material Control - Forecast
      </h1>
      <Tabs />

      <div className="mt-[41px] grid h-[42px] grid-cols-[881px_399px_1fr] items-center">
        <label className="col-start-2 flex items-center gap-[10px] leading-[36px]">
          <input type="checkbox" defaultChecked className="size-[19px] accent-[#0075ff]" />
          Show line-items
        </label>
        <select
          aria-label="Project"
          className="h-[42px] w-[400px] appearance-none rounded-md border border-[#aaa] bg-white px-3 text-[#444]"
        >
          <option>Industrial Demo Project</option>
        </select>
      </div>

      <div className="mt-[79px] flex text-[#333]">
        <button className="h-[51px] rounded-l-md border border-[#ccc] px-[18px]">Copy</button>
        <button className="-ml-px h-[51px] rounded-r-md border border-[#ccc] px-[18px]">Excel</button>
      </div>

      <ForecastTable />

      <div className="flex items-start justify-between">
        <p className="mt-[21px] ml-[14px]">Showing 1 to 7 of 7 entries</p>
        <div className="mt-[12px] flex text-[#777]">
          <button className="h-[51px] rounded-l-md border border-[#ddd] px-[18px]">Previous</button>
          <button className="-ml-px h-[51px] border border-[#337ab7] bg-[#337ab7] px-[18px] text-white">1</button>
          <button className="-ml-px h-[51px] rounded-r-md border border-[#ddd] px-[18px]">Next</button>
        </div>
      </div>

      <ViewerWindow />
    </main>
  );
}
